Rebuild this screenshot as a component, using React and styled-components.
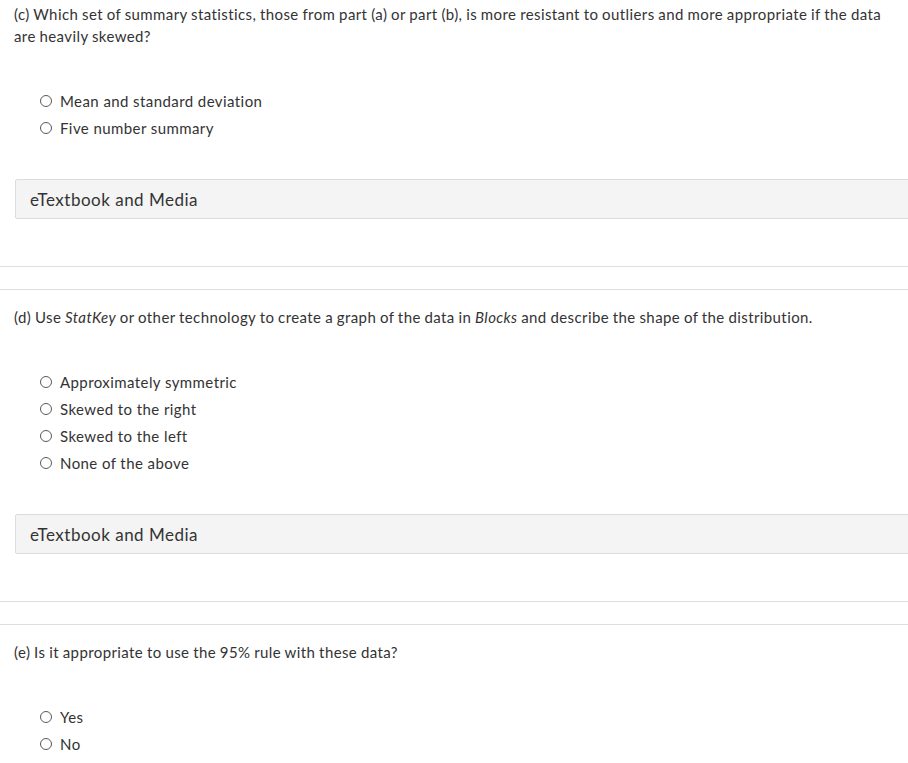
import React from "react";
import styled, { createGlobalStyle } from "styled-components";

const GlobalStyle = createGlobalStyle`
  html, body {
    margin: 0;
    padding: 0;
    background: #fff;
  }
  body {
    font-family: Lato, "Open Sans", "Liberation Sans", sans-serif;
    color: #333;
    overflow: hidden;
  }
`;

const Page = styled.div`
  width: 908px;
  margin-top: -13px;
`;

const Section = styled.section`
  display: flex;
  flex-direction: column;
`;

const Prompt = styled.p`
  margin: 16px 0 0;
  padding: 0 18px 0 14px;
  font-size: 15px;
  letter-spacing: 0.4px;
  word-spacing: -0.45px;
  line-height: 22px;
  color: #333;
`;

const OptionList = styled.ul`
  list-style: none;
  margin: 40px 0 0;
  padding: 0 0 0 40px;
`;

const Option = styled.li`
  display: flex;
  align-items: center;
  height: 27px;
  font-size: 15px;
  letter-spacing: 0.42px;
  color: #333;
`;

const Radio = styled.span`
  width: 10px;
  height: 10px;
  border: 1px solid #5a5a5a;
  border-radius: 50%;
  margin-right: 8px;
  flex-shrink: 0;
`;

const MediaBar = styled.div`
  margin: 38px -8px 0 15px;
  height: 38px;
  display: flex;
  align-items: center;
  padding-left: 14px;
  background: #f4f4f4;
  border: 1px solid #dcdcdc;
  border-radius: 2px;
  font-size: 17px;
  letter-spacing: 0.5px;
  color: #333;
`;

const Divider = styled.div`
  margin-top: 47px;
  height: 22px;
  border-top: 1px solid #dedede;
  border-bottom: 1px solid #dedede;
`;

const questions = [
  {
    prompt: (
      <>
        (c) Which set of summary statistics, those from part (a) or part (b), is more resistant to outliers and
        more appropriate if the data are heavily skewed?
      </>
    ),
    options: ["Mean and standard deviation", "Five number summary"],
    media: true,
  },
  {
    prompt: (
      <>
        (d) Use <i>StatKey</i> or other technology to create a graph of the data in <i>Blocks</i> and describe
        the shape of the distribution.
      </>
    ),
    options: ["Approximately symmetric", "Skewed to the right", "Skewed to the left", "None of the above"],
    media: true,
  },
  {
    prompt: <>(e) Is it appropriate to use the 95% rule with these data?</>,
    options: ["Yes", "No"],
    media: false,
  },
];

export default function App() {
  return (
    <Page>
      <GlobalStyle />
      {questions.map((q, i) => (
        <Section key={i}>
          <Prompt>{q.prompt}</Prompt>
          <OptionList>
            {q.options.map((o) => (
              <Option key={o}>
                <Radio />
                {o}
              </Option>
            ))}
          </OptionList>
          {q.media && (
            <>
              <MediaBar>eTextbook and Media</MediaBar>
              <Divider />
            </>
          )}
        </Section>
      ))}
    </Page>
  );
}
